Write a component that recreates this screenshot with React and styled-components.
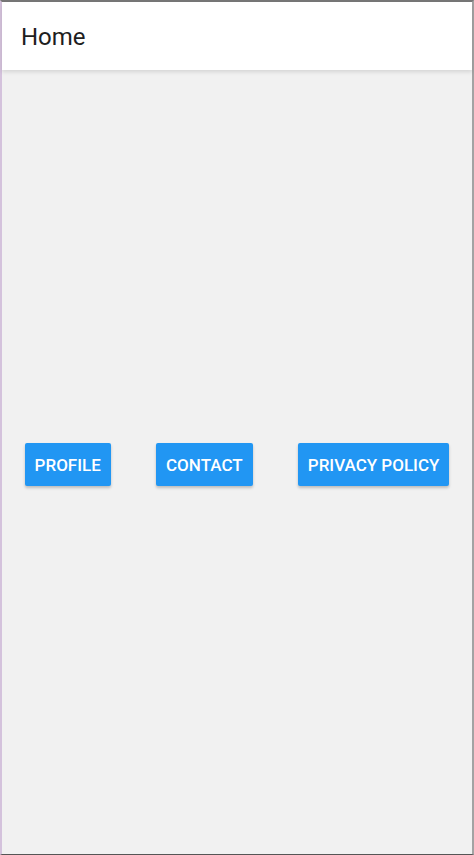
import React from "react";
import styled, { createGlobalStyle } from "styled-components";

const Global = createGlobalStyle`
  html, body { margin: 0; padding: 0; height: 100%; }
  body { font-family: Roboto, "Noto Sans", sans-serif; background: #f1f1f1; }
  #root { height: 100%; }
`;

const Frame = styled.div`
  box-sizing: border-box;
  height: 855px;
  width: 474px;
  border-top: 2px solid #777777;
  border-left: 2px solid #d4c2dc;
  border-right: 2px solid #a3a3a3;
  border-bottom: 1px solid #555;
  display: flex;
  flex-direction: column;
  background: #f1f1f1;
`;

const Header = styled.header`
  height: 68px;
  flex-shrink: 0;
  background: #ffffff;
  display: flex;
  align-items: center;
  padding-left: 19px;
  padding-top: 2px;
  box-sizing: border-box;
  box-shadow: 0 2px 4px rgba(0, 0, 0, 0.12);
  position: relative;
  z-index: 1;
`;

const Title = styled.h1`
  margin: 0;
  font-family: Roboto, sans-serif;
  font-weight: 400;
  font-size: 24px;
  color: #1e1e1e;
`;

const Body = styled.main`
  flex: 1;
  display: flex;
  align-items: center;
  justify-content: space-around;
  padding-top: 5px;
`;

const Button = styled.button`
  height: 43px;
  padding: 0 10px;
  border: none;
  border-radius: 2px;
  background: #2196f3;
  color: #ffffff;
  font-family: Roboto, sans-serif;
  font-weight: 500;
  font-size: 17px;
  text-transform: uppercase;
  box-shadow: 0 2px 3px rgba(0, 0, 0, 0.22);
  cursor: pointer;
`;

export default function App() {
  return (
    <>
      <Global />
      <Frame>
        <Header>
          <Title>Home</Title>
        </Header>
        <Body>
          <Button>Profile</Button>
          <Button>Contact</Button>
          <Button>Privacy Policy</Button>
        </Body>
      </Frame>
    </>
  );
}
